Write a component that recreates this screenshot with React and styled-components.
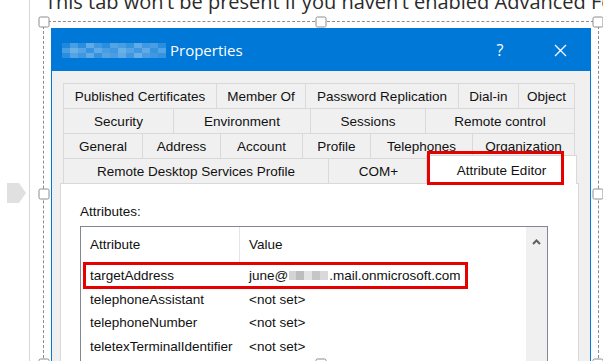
import React from "react";
import styled, { createGlobalStyle } from "styled-components";

const GlobalStyle = createGlobalStyle`
  html, body { margin: 0; padding: 0; background: #fff; }
  body { font-family: "Liberation Sans", Arial, sans-serif; overflow: hidden; }
  * { box-sizing: border-box; }
`;

const Page = styled.div`
  width: 603px;
  height: 361px;
  overflow: hidden;
  display: flex;
  background: #fff;
`;

const Gutter = styled.div`
  width: 30px;
  flex: none;
  border-right: 1px solid #d6d6d6;
  padding: 183px 0 0 7px;
`;

const Content = styled.div`
  flex: 1;
  min-width: 0;
  display: flex;
  flex-direction: column;
`;

const IntroText = styled.div`
  margin-top: -12px;
  height: 28px;
  line-height: 28px;
  padding-left: 15px;
  font-family: "Open Sans", "Noto Sans", sans-serif;
  font-size: 20px;
  color: #2b2b2b;
  white-space: nowrap;
`;

const Figure = styled.div`
  position: relative;
  margin: 5px 0 0 13px;
  width: 556px;
  padding: 6px 7px 0 7px;
  border: 1px dashed #8c8c8c;
  border-bottom: none;
`;

const Handle = styled.div`
  position: absolute;
  width: 11px;
  height: 11px;
  background: #fff;
  border: 1px solid #8c8c8c;
  border-radius: 2px;
  left: ${(p) => p.$x};
  top: ${(p) => p.$y};
  transform: translate(-50%, -50%);
`;

const Dialog = styled.div`
  width: 540px;
  height: 340px;
  border: 1px solid #0078d7;
  background: #f0f0f0;
  display: flex;
  flex-direction: column;
`;

const TitleBar = styled.div`
  height: 42px;
  flex: none;
  background: #0078d7;
  display: flex;
  align-items: center;
  padding: 0 7px 0 10px;
  color: #fff;
`;

const Blur = styled.div`
  display: grid;
  grid-template-columns: repeat(13, 8px);
  grid-auto-rows: 5px;
  margin-right: 4px;
`;

const BlurCell = styled.div`
  background: rgba(210, 230, 250, ${(p) => p.$a});
`;

const TitleText = styled.div`
  font-family: "Open Sans", "Noto Sans", sans-serif;
  font-size: 15px;
  flex: 1;
`;

const TitleButton = styled.div`
  width: 46px;
  height: 42px;
  display: flex;
  align-items: center;
  justify-content: center;
  font-family: "Open Sans", "Noto Sans", sans-serif;
  font-size: 16px;
  margin-left: ${(p) => p.$gap || 0}px;
`;

const Body = styled.div`
  flex: 1;
  display: flex;
  flex-direction: column;
  padding: 12px 11px 0 8px;
`;

const Tabs = styled.div`
  margin: 0 3px;
  display: flex;
  flex-direction: column;
`;

const TabRow = styled.div`
  display: flex;
  height: 25px;
`;

const Tab = styled.div`
  position: relative;
  flex: none;
  width: ${(p) => (p.$selected ? p.$w + 4 : p.$w)}px;
  height: ${(p) => (p.$selected ? 29 : 25)}px;
  margin: ${(p) => (p.$selected ? "-3px -2px 0 -2px" : "0")};
  z-index: ${(p) => (p.$selected ? 2 : 0)};
  background: ${(p) => (p.$selected ? "#fff" : "#f0f0f0")};
  border: 1px solid #d9d9d9;
  border-right: none;
  border-bottom: none;
  display: flex;
  align-items: center;
  justify-content: center;
  font-size: 13.5px;
  color: #111;
  white-space: nowrap;
  padding-top: ${(p) => (p.$selected ? 1 : 0)}px;
  &:last-child {
    border-right: 1px solid #d9d9d9;
  }
`;

const RedBox = styled.div`
  position: absolute;
  left: ${(p) => p.$l}px;
  top: ${(p) => p.$t}px;
  width: ${(p) => p.$w}px;
  height: ${(p) => p.$h}px;
  border: 3px solid #e60000;
  pointer-events: none;
`;

const Panel = styled.div`
  flex: 1;
  background: #fff;
  border: 1px solid #d9d9d9;
  padding: 20px 0 0 19px;
`;

const Label = styled.div`
  font-size: 13.5px;
  line-height: 16px;
  color: #111;
`;

const ListBox = styled.div`
  margin-top: 6px;
  width: 468px;
  height: 160px;
  border: 1px solid #828790;
  display: flex;
`;

const ListMain = styled.div`
  flex: 1;
  display: flex;
  flex-direction: column;
`;

const Row = styled.div`
  position: relative;
  display: flex;
  height: ${(p) => (p.$header ? 37 : 23.6)}px;
  align-items: center;
  font-size: 13.5px;
  color: #111;
  white-space: nowrap;
`;

const Cell = styled.div`
  width: ${(p) => (p.$w ? p.$w + "px" : "auto")};
  flex: ${(p) => (p.$w ? "none" : 1)};
  height: 100%;
  display: flex;
  align-items: center;
  padding-left: ${(p) => p.$pad}px;
  border-right: ${(p) => (p.$divider ? "1px solid #e5e5e5" : "none")};
  padding-bottom: ${(p) => (p.$header ? 2 : 0)}px;
`;

const Smudge = styled.span`
  display: inline-flex;
  height: 9px;
  margin: 0 1px;
`;

const SmudgeCell = styled.span`
  width: ${(p) => p.$w}px;
  background: ${(p) => p.$c};
`;

const Scrollbar = styled.div`
  width: 21px;
  flex: none;
  background: #f0f0f0;
  display: flex;
  justify-content: center;
  padding-top: 12px;
`;

const Marker = () => (
  <svg width="19" height="20" viewBox="0 0 19 20">
    <path d="M0 0 H12 L19 10 L12 20 H0 Z" fill="#e0e0e0" />
  </svg>
);

const CloseIcon = () => (
  <svg width="13" height="13" viewBox="0 0 13 13">
    <path d="M1 1 L12 12 M12 1 L1 12" stroke="#fff" strokeWidth="1.3" />
  </svg>
);

const UpIcon = () => (
  <svg width="9" height="6" viewBox="0 0 9 6">
    <path d="M1 5 L4.5 1.5 L8 5" stroke="#606060" strokeWidth="2" fill="none" />
  </svg>
);

const tabRows = [
  [["Published Certificates", 153], ["Member Of", 89], ["Password Replication", 153], ["Dial-in", 60], ["Object", 57]],
  [["Security", 110], ["Environment", 137], ["Sessions", 115], ["Remote control", 150]],
  [["General", 79], ["Address", 78], ["Account", 82], ["Profile", 68], ["Telephones", 102], ["Organization", 103]],
  [["Remote Desktop Services Profile", 265], ["COM+", 100], ["Attribute Editor", 147, true]],
];

const blurAlpha = [
  0.15, 0.35, 0.2, 0.45, 0.3, 0.2, 0.4, 0.35, 0.25, 0.45, 0.3, 0.35, 0.2,
  0.35, 0.5, 0.4, 0.25, 0.45, 0.35, 0.3, 0.5, 0.4, 0.3, 0.45, 0.25, 0.4,
  0.2, 0.4, 0.3, 0.45, 0.25, 0.4, 0.35, 0.45, 0.3, 0.5, 0.35, 0.3, 0.25,
];

const rows = [
  ["targetAddress", "email"],
  ["telephoneAssistant", "<not set>"],
  ["telephoneNumber", "<not set>"],
  ["teletexTerminalIdentifier", "<not set>"],
];

export default function App() {
  return (
    <>
      <GlobalStyle />
      <Page>
        <Gutter>
          <Marker />
        </Gutter>
        <Content>
          <IntroText>This tab won’t be present if you haven’t enabled Advanced Features</IntroText>
          <Figure>
            <Handle $x="0" $y="0" />
            <Handle $x="50%" $y="0" />
            <Handle $x="100%" $y="0" />
            <Handle $x="0" $y="172px" />
            <Handle $x="100%" $y="172px" />
            <Handle $x="0" $y="342px" />
            <Handle $x="50%" $y="342px" />
            <Handle $x="100%" $y="342px" />
            <Dialog>
              <TitleBar>
                <Blur>
                  {blurAlpha.map((a, i) => (
                    <BlurCell key={i} $a={a} />
                  ))}
                </Blur>
                <TitleText>Properties</TitleText>
                <TitleButton>?</TitleButton>
                <TitleButton $gap={14}>
                  <CloseIcon />
                </TitleButton>
              </TitleBar>
              <Body>
                <Tabs>
                  {tabRows.map((row, ri) => (
                    <TabRow key={ri}>
                      {row.map(([label, w, sel]) => (
                        <Tab key={label} $w={w} $selected={!!sel}>
                          {label}
                          {sel && <RedBox $l={0} $t={-5} $w={137} $h={34} />}
                        </Tab>
                      ))}
                    </TabRow>
                  ))}
                </Tabs>
                <Panel>
                  <Label>Attributes:</Label>
                  <ListBox>
                    <ListMain>
                      <Row $header>
                        <Cell $w={159} $pad={9} $divider $header>Attribute</Cell>
                        <Cell $pad={9} $header>Value</Cell>
                      </Row>
                      {rows.map(([name, value], i) => (
                        <Row key={name}>
                          <Cell $w={159} $pad={9}>{name}</Cell>
                          <Cell $pad={9}>
                            {value === "email" ? (
                              <>
                                june@
                                <Smudge>
                                  <SmudgeCell $w={7} $c="#d4d4d4" />
                                  <SmudgeCell $w={8} $c="#bdbdbd" />
                                  <SmudgeCell $w={8} $c="#e3e3e3" />
                                  <SmudgeCell $w={8} $c="#c6c6c6" />
                                  <SmudgeCell $w={8} $c="#d9d9d9" />
                                </Smudge>
                                .mail.onmicrosoft.com
                              </>
                            ) : (
                              value
                            )}
                          </Cell>
                          {i === 0 && <RedBox $l={2} $t={-2} $w={385} $h={27} />}
                        </Row>
                      ))}
                    </ListMain>
                    <Scrollbar>
                      <UpIcon />
                    </Scrollbar>
                  </ListBox>
                </Panel>
              </Body>
            </Dialog>
          </Figure>
        </Content>
      </Page>
    </>
  );
}
